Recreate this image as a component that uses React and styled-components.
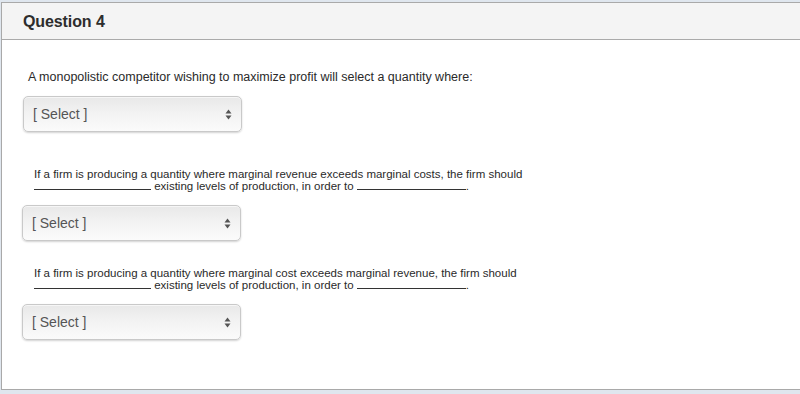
import React from "react";
import styled, { createGlobalStyle } from "styled-components";

const Global = createGlobalStyle`
  html, body { margin: 0; padding: 0; background: #dfe6ee; }
  body { font-family: "Liberation Sans", Arial, Helvetica, sans-serif; }
`;

const Page = styled.div`
  padding: 2px 0 4px 1px;
  background: #dfe6ee;
  width: 800px;
  overflow: hidden;
`;

const Card = styled.section`
  width: 820px;
  border: 1px solid #a9a9a9;
  background: #fff;
`;

const Header = styled.header`
  height: 36px;
  background: #f4f4f4;
  border-bottom: 1px solid #aaaaaa;
  display: flex;
  align-items: center;
  padding-left: 21px;
`;

const Title = styled.h2`
  margin: 0;
  font-size: 16px;
  font-weight: bold;
  color: #2d2d2d;
  letter-spacing: -0.1px;
  transform: translateY(1px);
`;

const Body = styled.div`
  height: 349px;
  padding: 29px 0 0 20px;
  box-sizing: border-box;
`;

const Block = styled.div`
  margin-bottom: ${(p) => p.$gap || 0}px;
`;

const Lead = styled.p`
  margin: 0 0 11px 6px;
  font-size: 12.5px;
  line-height: 16px;
  color: #2a2a2a;
`;

const Small = styled.p`
  margin: 0 0 13px 12px;
  font-size: 11.5px;
  line-height: 12px;
  color: #2a2a2a;
`;

const Line = styled.span`
  display: block;
  white-space: nowrap;
`;

const Blank = styled.span`
  display: inline-block;
  width: ${(p) => p.$w}px;
  border-bottom: 1px solid #333;
  height: 9px;
`;

const SelectBox = styled.div`
  width: 219px;
  height: 36px;
  box-sizing: border-box;
  margin-left: ${(p) => p.$ml || 0}px;
  border: 1px solid #c9c9c9;
  border-radius: 5px;
  background: linear-gradient(#e8e8e8, #f2f2f2 45%, #fbfbfb);
  box-shadow: 0 1px 2px rgba(0, 0, 0, 0.18), inset 0 1px 0 rgba(255,255,255,0.6);
  display: flex;
  align-items: center;
  justify-content: space-between;
  padding: 0 9px 0 9px;
  font-size: 14px;
  color: #555;
`;

const Arrows = () => (
  <svg width="7" height="11" viewBox="0 0 7 11">
    <path d="M3.5 0.5 L6.5 4.5 L0.5 4.5 Z" fill="#555" />
    <path d="M3.5 10.5 L6.5 6.5 L0.5 6.5 Z" fill="#555" />
  </svg>
);

const Select = ({ ml }) => (
  <SelectBox $ml={ml}>
    <span>[ Select ]</span>
    <Arrows />
  </SelectBox>
);

export default function App() {
  return (
    <Page>
      <Global />
      <Card>
        <Header>
          <Title>Question 4</Title>
        </Header>
        <Body>
          <Block $gap={36}>
            <Lead>A monopolistic competitor wishing to maximize profit will select a quantity where:</Lead>
            <Select ml={1} />
          </Block>
          <Block $gap={26}>
            <Small>
              <Line>If a firm is producing a quantity where marginal revenue exceeds marginal costs, the firm should</Line>
              <Line>
                <Blank $w={117} /> existing levels of production, in order to <Blank $w={109} />.
              </Line>
            </Small>
            <Select />
          </Block>
          <Block>
            <Small>
              <Line>If a firm is producing a quantity where marginal cost exceeds marginal revenue, the firm should</Line>
              <Line>
                <Blank $w={117} /> existing levels of production, in order to <Blank $w={109} />.
              </Line>
            </Small>
            <Select />
          </Block>
        </Body>
      </Card>
    </Page>
  );
}
